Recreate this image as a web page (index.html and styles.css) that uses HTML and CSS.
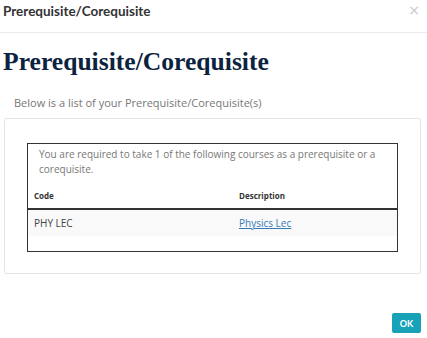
FILE: index.html
```html
<!DOCTYPE html>
<html>
<head>
<meta charset="utf-8">
<link rel="stylesheet" href="styles.css">
</head>
<body>
<div class="modal">
  <div class="modal-header">
    <span class="modal-title">Prerequisite/Corequisite</span>
    <span class="close">&times;</span>
  </div>
  <div class="modal-body">
    <h1 class="heading">Prerequisite/Corequisite</h1>
    <p class="subtitle">Below is a list of your Prerequisite/Corequisite(s)</p>
    <div class="card">
      <div class="box">
        <p class="note">You are required to take 1 of the following courses as a prerequisite or a corequisite.</p>
        <table class="tbl">
          <thead>
            <tr><th class="col-code">Code</th><th>Description</th></tr>
          </thead>
          <tbody>
            <tr class="row"><td>PHY LEC</td><td><a class="link" href="#">Physics Lec</a></td></tr>
          </tbody>
        </table>
        <div class="spacer"></div>
      </div>
    </div>
  </div>
  <div class="modal-footer">
    <button class="ok">OK</button>
  </div>
</div>
</body>
</html>
```
FILE: styles.css
```css
* { box-sizing: border-box; }
html, body { margin: 0; padding: 0; background: #fff; }
body { font-family: "Open Sans", "Liberation Sans", sans-serif; color: #333; width: 427px; }
.modal { width: 427px; }
.modal-header {
  display: flex; justify-content: space-between; align-items: center;
  height: 33px; padding: 0 7px 0 3px;
  border-bottom: 1px solid #e9ecef;
}
.modal-title { font-family: "Lato", sans-serif; font-weight: 700; font-size: 13.5px; color: #333; margin-top: -10px; }
.close { color: #c8c8c8; font-size: 14px; margin-top: -12px; font-family: "DejaVu Sans", sans-serif; }
.modal-body { padding: 0 6px 0 4px; }
.heading {
  margin: 13px 0 0 -1px; font-family: "Liberation Serif", serif; font-weight: 700;
  font-size: 25.6px; line-height: 32px; color: #0c2340;
}
.subtitle { margin: 17px 0 0 10px; font-size: 11px; line-height: 16px; color: #777; }
.card {
  margin-top: 7px; border: 1px solid #e3e3e3; border-radius: 3px;
  padding: 24px 22px 22px 22px; height: 156px;
}
.box { border: 1px solid #333; }
.note { margin: 3px 0 0 11px; font-size: 10px; line-height: 15px; color: #777; padding-right: 10px; }
.tbl { width: 100%; border-collapse: collapse; margin-top: 8px; }
.tbl th {
  text-align: left; font-size: 8px; font-weight: 700; color: #333; padding: 5px 6px 7px;
  border-bottom: 2px solid #333;
}
.tbl th.col-code { width: 205px; }
.tbl td { font-size: 10px; color: #444; padding: 6px 6px 6px; background: #f9f9f9; height: 27px; }
.link { color: #337ab7; text-decoration: underline; }
.spacer { height: 15px; }
.modal-footer { display: flex; justify-content: flex-end; padding: 39px 6px 0 0; }
.ok {
  background: #17a2b8; color: #fff; border: none; border-radius: 2px;
  font-family: "Lato", sans-serif; font-weight: 700; font-size: 9px;
  width: 29px; height: 20px; padding: 0;
}
```
